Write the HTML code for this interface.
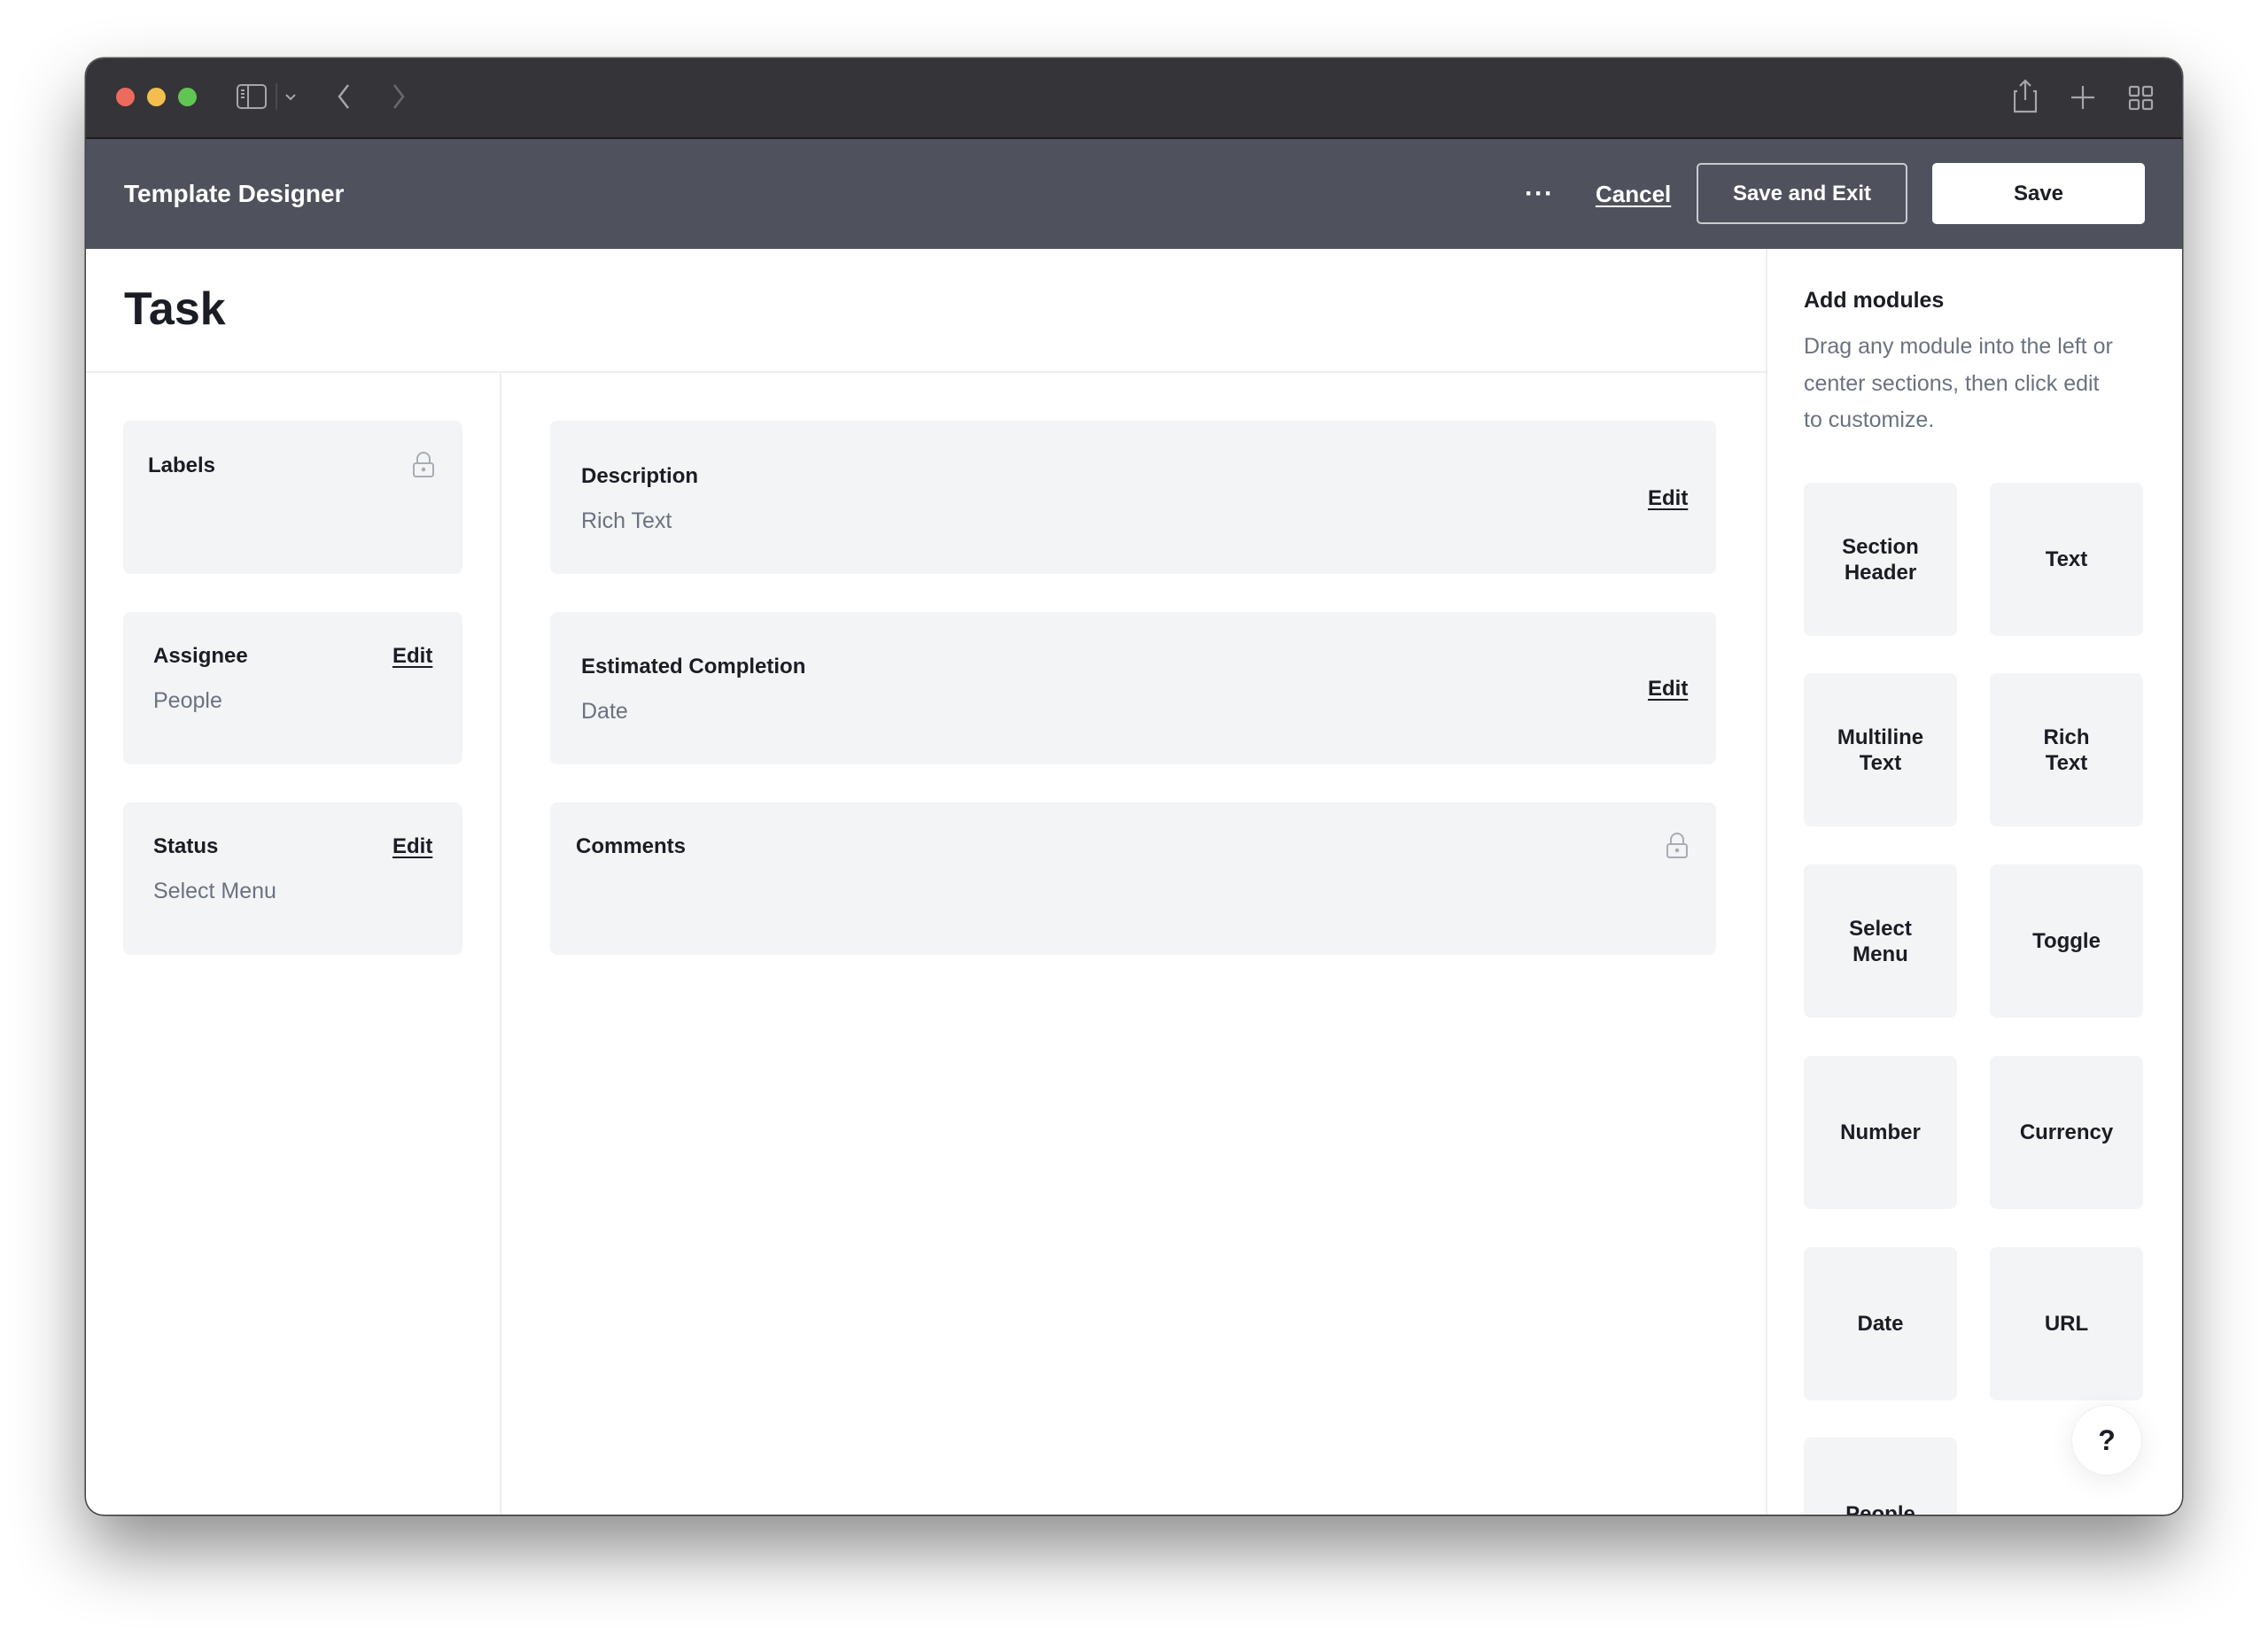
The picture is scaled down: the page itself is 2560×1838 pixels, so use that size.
<!DOCTYPE html>
<html><head><meta charset="utf-8"><style>
*{margin:0;padding:0;box-sizing:border-box}
body{width:2560px;height:1838px;background:#fff;font-family:"Liberation Sans",Arial,sans-serif;position:relative;overflow:hidden}
.win{position:absolute;left:97px;top:66px;width:2366px;height:1644px;border-radius:20px;overflow:hidden;background:#fff;box-shadow:0 40px 80px rgba(0,0,0,.45),0 0 0 1.5px #555}
.tb{position:absolute;left:0;top:0;width:100%;height:91px;background:#353438;border-bottom:2px solid #1e1e20}
.dot{position:absolute;top:33px;width:21px;height:21px;border-radius:50%}
.hd{position:absolute;left:0;top:91px;width:100%;height:124px;background:#4f525c}
.abs{position:absolute}
.card{position:absolute;background:#f3f4f6;border-radius:8px}
.lbl{position:absolute;font-weight:bold;font-size:24px;color:#1b1d24}
.sub{position:absolute;font-size:25px;color:#6b7280}
.edit{position:absolute;font-weight:bold;font-size:24px;color:#1b1d24;text-decoration:underline;text-underline-offset:4px}
.tile{position:absolute;width:173px;height:173px;background:#f3f4f6;border-radius:8px;display:flex;align-items:center;justify-content:center;text-align:center;font-weight:bold;font-size:24px;line-height:29px;color:#1b1d24}
</style></head><body>
<div class="win">
 <div class="tb">
  <div class="dot" style="left:34px;background:#ed6a5e"></div>
  <div class="dot" style="left:69px;background:#f4be4f"></div>
  <div class="dot" style="left:104px;background:#61c554"></div>
  <svg class="abs" style="left:170px;top:28px" width="80" height="30" viewBox="0 0 80 30" fill="none" stroke="#a6a6aa" stroke-width="2"><rect x="1" y="2" width="32" height="26" rx="4"/><line x1="13" y1="2" x2="13" y2="28"/><line x1="5" y1="8" x2="9" y2="8"/><line x1="5" y1="12" x2="9" y2="12"/><line x1="5" y1="16" x2="9" y2="16"/><line x1="45" y1="0" x2="45" y2="30" stroke="#4a4a4e"/><path d="M56 13l5 5 5-5"/></svg>
  <svg class="abs" style="left:282px;top:27px" width="80" height="32" viewBox="0 0 80 32" fill="none" stroke-width="2.5"><path d="M14 3L4 16l10 13" stroke="#a6a6aa"/><path d="M66 3l10 13-10 13" stroke="#6a6a6e"/></svg>
  <svg class="abs" style="left:2176px;top:23px" width="170" height="40" viewBox="0 0 170 40" fill="none" stroke="#a6a6aa" stroke-width="2.2"><path d="M4 14H1v23h24V14h-3M13 2v22M7 8l6-6 6 6"/><path d="M78 8v26M65 21h26"/><rect x="131" y="9" width="10" height="10" rx="1.5"/><rect x="146" y="9" width="10" height="10" rx="1.5"/><rect x="131" y="24" width="10" height="10" rx="1.5"/><rect x="146" y="24" width="10" height="10" rx="1.5"/></svg>
 </div>
 <div class="hd">
  <div class="abs" style="left:43px;top:46px;color:#fff;font-weight:bold;font-size:28px">Template Designer</div>
  <div class="abs" style="left:1624px;top:45px;color:#fff;font-weight:bold;font-size:30px;letter-spacing:1px">···</div>
  <div class="abs" style="left:1704px;top:47px;color:#fff;font-weight:bold;font-size:26px;text-decoration:underline;text-underline-offset:4px">Cancel</div>
  <div class="abs" style="left:1818px;top:27px;width:238px;height:69px;border:2px solid #c9cbd1;border-radius:5px;color:#fff;font-weight:bold;font-size:24px;display:flex;align-items:center;justify-content:center">Save and Exit</div>
  <div class="abs" style="left:2084px;top:27px;width:240px;height:69px;background:#fff;border-radius:5px;color:#1b1d24;font-weight:bold;font-size:24px;display:flex;align-items:center;justify-content:center">Save</div>
 </div>
 <div class="abs" style="left:43px;top:253px;font-weight:bold;font-size:52px;color:#1b1d24">Task</div>
 <div class="abs" style="left:0;top:353px;width:1897px;height:2px;background:#eceef2"></div>
 <div class="abs" style="left:467px;top:355px;width:2px;height:1300px;background:#eceef2"></div>
 <div class="abs" style="left:1896px;top:215px;width:2px;height:1440px;background:#eceef2"></div>

 <div class="card" style="left:42px;top:409px;width:383px;height:173px"></div>
 <div class="lbl" style="left:70px;top:446px">Labels</div>
 <svg class="abs" style="left:368px;top:444px" width="26" height="30" viewBox="0 0 26 30" fill="none" stroke="#a8acb4" stroke-width="2"><path d="M6 13V8a7 7 0 0 1 14 0v5"/><rect x="2" y="13" width="22" height="15" rx="2.5"/><circle cx="13" cy="20" r="1.3" fill="#a8acb4"/></svg>

 <div class="card" style="left:42px;top:625px;width:383px;height:172px"></div>
 <div class="lbl" style="left:76px;top:661px">Assignee</div>
 <div class="sub" style="left:76px;top:711px">People</div>
 <div class="edit" style="left:346px;top:661px">Edit</div>

 <div class="card" style="left:42px;top:840px;width:383px;height:172px"></div>
 <div class="lbl" style="left:76px;top:876px">Status</div>
 <div class="sub" style="left:76px;top:926px">Select Menu</div>
 <div class="edit" style="left:346px;top:876px">Edit</div>

 <div class="card" style="left:524px;top:409px;width:1316px;height:173px"></div>
 <div class="lbl" style="left:559px;top:458px">Description</div>
 <div class="sub" style="left:559px;top:508px">Rich Text</div>
 <div class="edit" style="left:1763px;top:483px">Edit</div>

 <div class="card" style="left:524px;top:625px;width:1316px;height:172px"></div>
 <div class="lbl" style="left:559px;top:673px">Estimated Completion</div>
 <div class="sub" style="left:559px;top:723px">Date</div>
 <div class="edit" style="left:1763px;top:698px">Edit</div>

 <div class="card" style="left:524px;top:840px;width:1316px;height:172px"></div>
 <div class="lbl" style="left:553px;top:876px">Comments</div>
 <svg class="abs" style="left:1783px;top:874px" width="26" height="30" viewBox="0 0 26 30" fill="none" stroke="#a8acb4" stroke-width="2"><path d="M6 13V8a7 7 0 0 1 14 0v5"/><rect x="2" y="13" width="22" height="15" rx="2.5"/><circle cx="13" cy="20" r="1.3" fill="#a8acb4"/></svg>

 <div class="abs" style="left:1939px;top:259px;font-weight:bold;font-size:25px;color:#1b1d24">Add modules</div>
 <div class="abs" style="left:1939px;top:305px;width:385px;font-size:25px;line-height:41.5px;color:#6b7280">Drag any module into the left or<br>center sections, then click edit<br>to customize.</div>

 <div class="tile" style="left:1939px;top:479px">Section<br>Header</div>
 <div class="tile" style="left:2149px;top:479px">Text</div>
 <div class="tile" style="left:1939px;top:694px">Multiline<br>Text</div>
 <div class="tile" style="left:2149px;top:694px">Rich<br>Text</div>
 <div class="tile" style="left:1939px;top:910px">Select<br>Menu</div>
 <div class="tile" style="left:2149px;top:910px">Toggle</div>
 <div class="tile" style="left:1939px;top:1126px">Number</div>
 <div class="tile" style="left:2149px;top:1126px">Currency</div>
 <div class="tile" style="left:1939px;top:1342px">Date</div>
 <div class="tile" style="left:2149px;top:1342px">URL</div>
 <div class="tile" style="left:1939px;top:1557px">People</div>
 <div class="abs" style="left:2241px;top:1520px;width:80px;height:80px;border-radius:50%;background:#fff;border:1.5px solid #eceef2;box-shadow:0 6px 30px rgba(0,0,0,.08);display:flex;align-items:center;justify-content:center;font-weight:bold;font-size:32px;color:#1b1d24">?</div>
</div>
</body></html>
